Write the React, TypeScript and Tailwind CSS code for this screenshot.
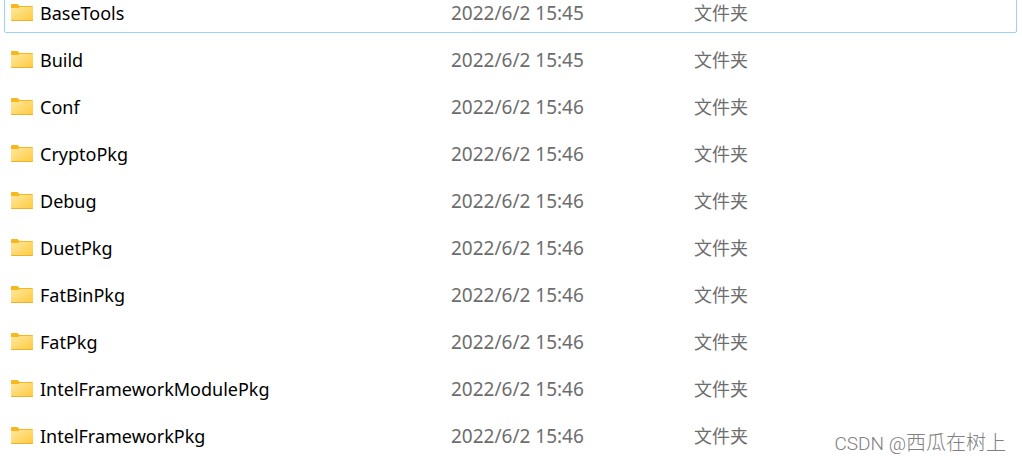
interface Folder {
  name: string
  modified: string
}

const folders: Folder[] = [
  { name: 'BaseTools', modified: '2022/6/2 15:45' },
  { name: 'Build', modified: '2022/6/2 15:45' },
  { name: 'Conf', modified: '2022/6/2 15:46' },
  { name: 'CryptoPkg', modified: '2022/6/2 15:46' },
  { name: 'Debug', modified: '2022/6/2 15:46' },
  { name: 'DuetPkg', modified: '2022/6/2 15:46' },
  { name: 'FatBinPkg', modified: '2022/6/2 15:46' },
  { name: 'FatPkg', modified: '2022/6/2 15:46' },
  { name: 'IntelFrameworkModulePkg', modified: '2022/6/2 15:46' },
  { name: 'IntelFrameworkPkg', modified: '2022/6/2 15:46' },
]

const focused = 'BaseTools'

export default function App() {
  return (
    <main className="relative overflow-hidden bg-white pr-[5px] pl-1 font-['Noto_Sans','Noto_Sans_CJK_SC',sans-serif] text-[18px] leading-6">
      {/* the list is scrolled a little, so the first row is cut at the top */}
      <table className="-mt-[14px] w-full table-fixed border-separate border-spacing-x-0 border-spacing-y-2">
        <colgroup>
          <col className="w-[447px]" />
          <col className="w-[243px]" />
          <col />
        </colgroup>
        <tbody>
          {folders.map((folder) => (
            <FolderRow key={folder.name} folder={folder} active={folder.name === focused} />
          ))}
        </tbody>
      </table>
      <div className="absolute right-4 bottom-[6px] font-['Roboto','Noto_Sans_CJK_SC',sans-serif] text-[20px] leading-7 font-light text-[#808080]">
        <span className="text-[19px]">CSDN @</span>西瓜在树上
      </div>
    </main>
  )
}

function FolderRow({ folder, active }: { folder: Folder; active: boolean }) {
  return (
    <tr className={active ? 'rounded-[2px] outline-1 -outline-offset-1 outline-[#99d1ff]' : ''}>
      <td className="h-[39px] p-0 pb-[2px] pl-[7px] text-black">
        <div className="flex items-center gap-[7px]">
          <FolderIcon />
          <span>{folder.name}</span>
        </div>
      </td>
      <td className="p-0 pb-[2px] text-[19px] text-[#6d6d6d]">{folder.modified}</td>
      <td className="p-0 pb-[2px] text-[#6d6d6d]">文件夹</td>
    </tr>
  )
}

function FolderIcon() {
  return (
    <svg width="22" height="18" viewBox="0 0 22 18" className="shrink-0" aria-hidden="true">
      <defs>
        <linearGradient id="folder-front" x1="0" y1="0" x2="1" y2="1">
          <stop offset="0" stopColor="#ffe8a0" />
          <stop offset="1" stopColor="#ffca3c" />
        </linearGradient>
      </defs>
      <path d="M0 1Q0 0 1 0H6.5L8.5 2H21Q22 2 22 3V8H0Z" fill="#f9b71c" />
      <path d="M0 4H7L9 3H22V16Q22 17 21 17H1Q0 17 0 16Z" fill="url(#folder-front)" />
      <path d="M0 16H22Q22 17 21 17H1Q0 17 0 16Z" fill="#eeb02e" />
    </svg>
  )
}
